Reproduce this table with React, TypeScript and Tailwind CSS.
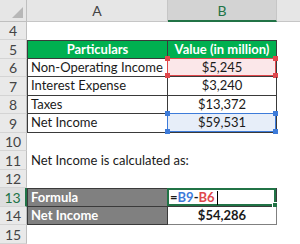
import React from 'react'

const rowH = ['h-[18px]', 'h-[19px]']

function Label({ n, selected }: { n: number; selected?: boolean }) {
  return (
    <div
      className={`w-[27px] shrink-0 flex items-center justify-center border-b border-[#d4d4d4] text-[14px] ${
        selected ? 'bg-[#dedede] text-[#217346] border-r-2 border-r-[#217346]' : 'bg-[#e9e9e9] text-[#444] border-r border-r-[#bfbfbf]'
      }`}
    >
      {n}
    </div>
  )
}

function Row({ n, i, selected, children }: { n: number; i: number; selected?: boolean; children?: React.ReactNode }) {
  return (
    <div className={`flex ${rowH[i % 2]}`}>
      <Label n={n} selected={selected} />
      {children ?? <div className="flex-1 bg-white" />}
    </div>
  )
}

function Corners({ color }: { color: string }) {
  const sq = `absolute w-[5px] h-[5px] ${color}`
  return (
    <>
      <span className={`${sq} -left-[3px] -top-[3px]`} />
      <span className={`${sq} -right-[3px] -top-[3px]`} />
      <span className={`${sq} -left-[3px] -bottom-[3px]`} />
      <span className={`${sq} -right-[3px] -bottom-[3px]`} />
    </>
  )
}

export default function App() {
  const cellA = 'w-[141px] shrink-0 flex items-center px-[3px] border-l border-r border-b border-[#3a3a3a] whitespace-nowrap'
  const cellB = 'w-[109px] shrink-0 flex items-center justify-center border-r border-b border-[#3a3a3a] relative'
  const rest = 'flex-1 bg-white'

  const body: [string, string][] = [
    ['Non-Operating Income', '$5,245'],
    ['Interest Expense', '$3,240'],
    ['Taxes', '$13,372'],
    ['Net Income', '$59,531'],
  ]

  return (
    <div className="w-[300px] h-[244px] overflow-hidden bg-white text-[13px] text-[#1a1a1a] font-['Lato','Liberation_Sans',sans-serif]">
      {/* column headers */}
      <div className="flex h-[22px] bg-[#e6e6e6] text-[#444] text-[14px]">
        <div className="w-[27px] shrink-0 relative border-r border-b border-[#bfbfbf]">
          <svg className="absolute right-[3px] bottom-[3px]" width="11" height="11" viewBox="0 0 11 11">
            <polygon points="11,0 11,11 0,11" fill="#b7b7b7" />
          </svg>
        </div>
        <div className="w-[141px] shrink-0 flex items-center justify-center border-r border-b border-[#c6c6c6]">A</div>
        <div className="w-[109px] shrink-0 flex items-center justify-center bg-[#d3d3d3] text-[#217346] border-r border-[#c6c6c6] border-b-2 border-b-[#217346]">
          B
        </div>
        <div className="flex-1 border-b border-[#c6c6c6]" />
      </div>

      <Row n={4} i={0} />

      <Row n={5} i={1}>
        <div className={`${cellA} border-t bg-[#00b050] text-white font-bold justify-center`}>Particulars</div>
        <div className={`${cellB} border-t bg-[#00b050] text-white font-bold`}>Value (in million)</div>
        <div className={rest} />
      </Row>

      {body.map(([a, b], k) => (
        <Row key={a} n={6 + k} i={k}>
          <div className={cellA}>{a}</div>
          <div className={`${cellB} ${k === 0 ? 'bg-[#fbe7e9]' : k === 3 ? 'bg-[#e7eef9]' : ''}`}>
            {k === 0 && (
              <div className="absolute -left-px -top-px right-0 bottom-0 border border-[#e0474c]">
                <Corners color="bg-[#e0474c]" />
              </div>
            )}
            {k === 3 && (
              <div className="absolute -left-px -top-px right-0 bottom-0 border border-[#3d7bd9]">
                <Corners color="bg-[#3d7bd9]" />
              </div>
            )}
            <span className="relative">{b}</span>
          </div>
          <div className={rest} />
        </Row>
      ))}

      <Row n={10} i={0} />

      <Row n={11} i={1}>
        <div className="flex-1 flex items-center px-[4px] bg-white whitespace-nowrap">Net Income is calculated as:</div>
      </Row>

      <Row n={12} i={0} />

      <Row n={13} i={1} selected>
        <div className={`${cellA} border-t bg-[#808080] text-white font-bold`}>Formula</div>
        <div className={`${cellB} border-t bg-white justify-start`}>
          <div className="absolute -left-px -top-px right-0 bottom-0 border-2 border-[#217346]">
            <span className="absolute -right-[4px] -bottom-[4px] w-[6px] h-[6px] bg-[#217346] border border-white" />
          </div>
          <span className="relative pl-[2px] font-bold flex items-center">
            <span className="text-[#1a1a1a]">=</span>
            <span className="text-[#3d7bd9]">B9</span>
            <span className="text-[#1a1a1a]">-</span>
            <span className="text-[#e0474c]">B6</span>
            <span className="ml-[2px] w-px h-[14px] bg-black" />
          </span>
        </div>
        <div className={rest} />
      </Row>

      <Row n={14} i={0}>
        <div className={`${cellA} bg-[#808080] text-white font-bold`}>Net Income</div>
        <div className={`${cellB} font-bold border-[#808080]`}>$54,286</div>
        <div className={rest} />
      </Row>

      <Row n={15} i={1} />
    </div>
  )
}
